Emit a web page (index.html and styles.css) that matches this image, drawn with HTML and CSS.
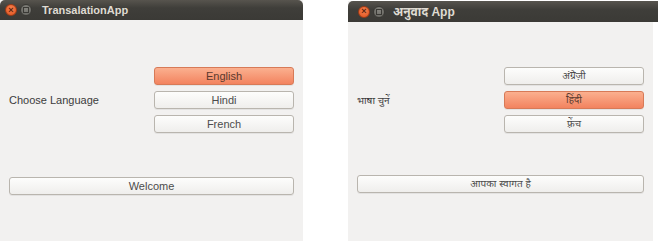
FILE: index.html
```html
<html>

<head>
    <link rel="stylesheet" href="styles.css">
</head>

<body>
    <div class="desktop">
        <div class="window window--left">
            <div class="titlebar">
                <span class="win-btn win-btn--close">&times;</span>
                <span class="win-btn win-btn--min"><span class="win-btn__box"></span></span>
                <span class="titlebar__title">TransalationApp</span>
            </div>
            <div class="content">
                <div class="chooser">
                    <div class="chooser__label">Choose Language</div>
                    <div class="chooser__list">
                        <div class="btn btn--active">English</div>
                        <div class="btn">Hindi</div>
                        <div class="btn">French</div>
                    </div>
                </div>
                <div class="btn btn--wide">Welcome</div>
            </div>
        </div>

        <div class="window window--right">
            <div class="titlebar">
                <span class="win-btn win-btn--close">&times;</span>
                <span class="win-btn win-btn--min"><span class="win-btn__box"></span></span>
                <span class="titlebar__title">अनुवाद App</span>
            </div>
            <div class="content">
                <div class="chooser">
                    <div class="chooser__label">भाषा चुनें</div>
                    <div class="chooser__list">
                        <div class="btn">अंग्रेज़ी</div>
                        <div class="btn btn--active">हिंदी</div>
                        <div class="btn">फ़्रेंच</div>
                    </div>
                </div>
                <div class="btn btn--wide">आपका स्वागत है</div>
            </div>
        </div>
    </div>
</body>

</html>
```

FILE: styles.css
```css
body {
    margin: 0;
    background: #ffffff;
    font-family: "Liberation Sans", "Noto Sans", sans-serif;
    font-size: 11px;
    color: #3c3c3c;
}

.desktop {
    display: flex;
    align-items: flex-start;
    gap: 45px;
    height: 241px;
    overflow: hidden;
}

.window {
    display: flex;
    flex-direction: column;
    height: 241px;
    background: #f2f1f0;
}

.window--left {
    width: 303px;
}

.window--right {
    width: 305px;
    margin-top: 1px;
}

.titlebar {
    display: flex;
    align-items: center;
    height: 20px;
    padding-left: 5px;
    background: linear-gradient(#57544e, #3f3e3a 40%, #3b3a36);
    border-radius: 5px 5px 0 0;
}

.window--right .titlebar {
    height: 21px;
    padding-left: 10px;
    /* right edge runs off screen */
    margin-right: -10px;
}

.win-btn {
    display: flex;
    align-items: center;
    justify-content: center;
    width: 12px;
    height: 12px;
    border-radius: 50%;
    margin-right: 3px;
    box-sizing: border-box;
}

.win-btn--close {
    background: radial-gradient(circle at 50% 35%, #f7804e, #e0531f);
    border: 1px solid #9c3b17;
    color: #5a2410;
    font-size: 9px;
    line-height: 9px;
    font-weight: bold;
}

.win-btn--min {
    background: radial-gradient(circle at 50% 35%, #85847e, #63625d);
    border: 1px solid #3a3935;
}

.win-btn__box {
    width: 4px;
    height: 4px;
    border: 1px solid #3a3935;
}

.titlebar__title {
    margin-left: 7px;
    color: #dfdbd2;
    font-weight: bold;
    font-size: 11px;
}

.window--right .titlebar__title {
    margin-left: 5px;
    font-size: 12px;
}

.content {
    display: flex;
    flex-direction: column;
    padding: 47px 9px 0 9px;
}

.window--right .content {
    padding: 45px 9px 0 9px;
}

.chooser {
    display: flex;
    align-items: center;
}

.chooser__label {
    flex: 1;
}

.chooser__list {
    display: flex;
    flex-direction: column;
    gap: 6px;
    width: 140px;
}

.btn {
    height: 18px;
    line-height: 16px;
    box-sizing: border-box;
    text-align: center;
    border: 1px solid #b9b5ae;
    border-radius: 3px;
    background: linear-gradient(#fdfdfc, #efeeec);
    box-shadow: 0 1px 0 rgba(0, 0, 0, 0.06);
    color: #4c4c4c;
}

.window--right .btn,
.window--right .chooser__label {
    font-size: 10px;
}

.btn--active {
    background: linear-gradient(#fbb08f, #f3835f);
    border-color: #d77a57;
    color: #5a3a2e;
}

.btn--wide {
    margin-top: 44px;
}

.window--right .btn--wide {
    margin-top: 42px;
}
```
